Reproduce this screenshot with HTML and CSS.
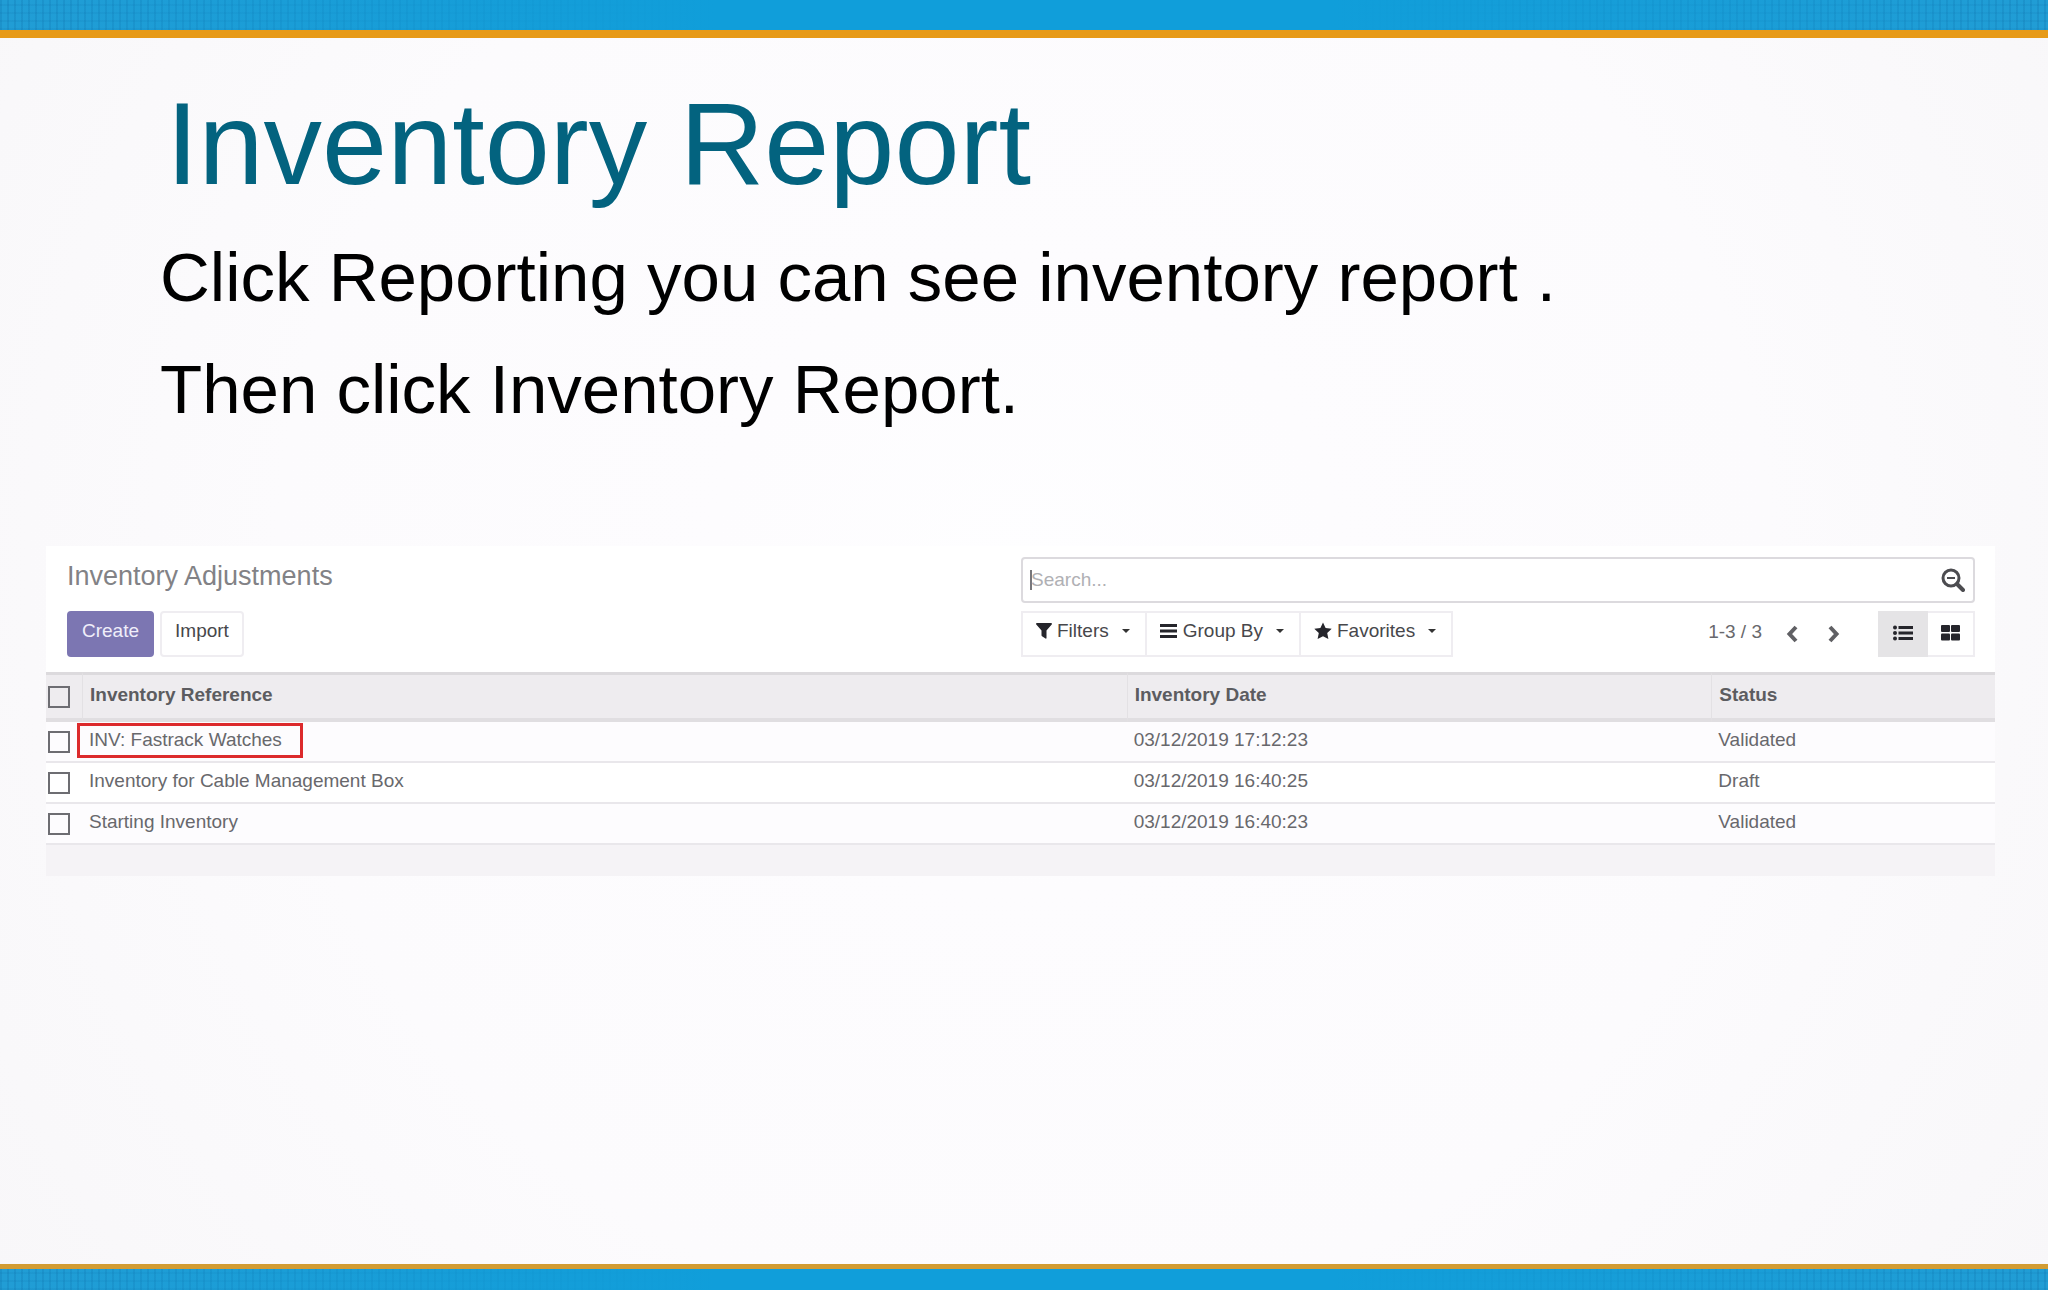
FILE: index.html
```html
<!DOCTYPE html>
<html lang="en">
<head>
  <meta charset="UTF-8">
  <title>Inventory Report</title>
  <link rel="stylesheet" href="styles.css">
</head>
<body>

  <div class="band band-top"></div>

  <main class="slide">
    <h1>Inventory Report</h1>
    <div class="steps">
      <p>Click Reporting you can see inventory report .</p>
      <p>Then click Inventory Report.</p>
    </div>

    <section class="panel">
      <div class="controls">
        <h2>Inventory Adjustments</h2>

        <div class="search">
          <span class="caret"></span>
          <input type="text" placeholder="Search..." aria-label="Search">
          <button type="button" class="icon-btn" aria-label="Search options">
            <svg width="24" height="24" viewBox="0 0 24 24" fill="none" stroke="#4c4c50">
              <circle cx="10" cy="10" r="8" stroke-width="3"/>
              <path d="M16 16l6 6" stroke-width="4" stroke-linecap="round"/>
              <path d="M6 10h8" stroke-width="2"/>
            </svg>
          </button>
        </div>

        <div class="actions">
          <button type="button" class="btn btn-primary">Create</button>
          <button type="button" class="btn">Import</button>
        </div>

        <div class="tools">
          <div class="group">
            <button type="button" class="btn">
              <svg width="16" height="18" viewBox="0 0 16 18"><path d="M0.5 1h15q.8.9 0 1.7L10.500 8.500V16q-.1 1-1 .6L6 14.200q-.5-.4-.5-1V8.500L.5 2.700Q-.3 1.900.5 1z"/></svg>
              Filters <i class="arrow"></i>
            </button>
            <button type="button" class="btn">
              <svg width="18" height="18" viewBox="0 0 18 18"><path d="M0 2h17v3H0zM0 7.500h17v3H0zM0 13h17v3H0z"/></svg>
              Group By <i class="arrow"></i>
            </button>
            <button type="button" class="btn">
              <svg width="18" height="18" viewBox="0 0 18 18"><path d="M9 .5l2.600 5.500 6.100.8-4.500 4.200 1.200 6.100L9 14.200 3.600 17.100l1.200-6.100L.3 6.800 6.400 6z"/></svg>
              Favorites <i class="arrow"></i>
            </button>
          </div>

          <div class="pager">
            <span>1-3 / 3</span>
            <button type="button" class="icon-btn" aria-label="Previous">
              <svg width="12" height="18" viewBox="0 0 12 18" fill="none" stroke="#606064" stroke-width="4"><path d="M10 2L3.500 9l6.500 7"/></svg>
            </button>
            <button type="button" class="icon-btn" aria-label="Next">
              <svg width="12" height="18" viewBox="0 0 12 18" fill="none" stroke="#606064" stroke-width="4"><path d="M2 2l6.500 7L2 16"/></svg>
            </button>
          </div>

          <div class="group views">
            <button type="button" class="btn active" aria-label="List view">
              <svg width="20" height="16" viewBox="0 0 20 16"><path d="M5.500 1H20v3H5.500zM5.500 6.500H20v3H5.500zM5.500 12H20v3H5.500z"/><circle cx="2" cy="2.500" r="2"/><circle cx="2" cy="8" r="2"/><circle cx="2" cy="13.500" r="2"/></svg>
            </button>
            <button type="button" class="btn" aria-label="Kanban view">
              <svg width="19" height="16" viewBox="0 0 19 16"><rect width="9" height="7" rx="1"/><rect x="10" width="9" height="7" rx="1"/><rect y="8.500" width="9" height="7" rx="1"/><rect x="10" y="8.500" width="9" height="7" rx="1"/></svg>
            </button>
          </div>
        </div>
      </div>

      <table>
        <thead>
          <tr>
            <th class="col-check"><input type="checkbox" aria-label="Select all"></th>
            <th class="col-ref">Inventory Reference</th>
            <th class="col-date">Inventory Date</th>
            <th>Status</th>
          </tr>
        </thead>
        <tbody>
          <tr>
            <td><input type="checkbox" aria-label="Select INV: Fastrack Watches"></td>
            <td><span class="marked">INV: Fastrack Watches</span></td>
            <td>03/12/2019 17:12:23</td>
            <td>Validated</td>
          </tr>
          <tr>
            <td><input type="checkbox" aria-label="Select Inventory for Cable Management Box"></td>
            <td>Inventory for Cable Management Box</td>
            <td>03/12/2019 16:40:25</td>
            <td>Draft</td>
          </tr>
          <tr>
            <td><input type="checkbox" aria-label="Select Starting Inventory"></td>
            <td>Starting Inventory</td>
            <td>03/12/2019 16:40:23</td>
            <td>Validated</td>
          </tr>
        </tbody>
      </table>
      <div class="panel-footer"></div>
    </section>
  </main>

  <div class="band band-bottom"></div>

</body>
</html>
```
FILE: styles.css
```css
* {
  box-sizing: border-box;
}
body {
  margin: 0;
  min-height: 100vh;
  display: flex;
  flex-direction: column;
  font-family: "Liberation Sans", Arial, sans-serif;
  color: #68686c;
  background: radial-gradient(circle at 50% 45%, #fefeff 0, #fdfcfe 25%, #fcfbfd 60%, #f8f7f9 100%);
}

/* blue bands with a faint weave that fades out to the middle */
.band {
  background:
    linear-gradient(90deg, rgba(16,158,218,0) 0, #109eda 35%, #109eda 65%, rgba(16,158,218,0) 100%),
    repeating-linear-gradient(90deg, rgba(0,80,140,0.14) 0, rgba(0,80,140,0.14) 2px, transparent 2px, transparent 7px),
    repeating-linear-gradient(0deg, rgba(0,80,140,0.08) 0, rgba(0,80,140,0.08) 2px, transparent 2px, transparent 8px),
    #219dd5;
}
.band-top {
  height: 38px;
  border-bottom: 8px solid #e79a18;
}
.band-bottom {
  height: 26px;
  border-top: 5px solid #d29c33;
}

.slide {
  flex: 1;
  padding: 38px 53px 0 46px;
}
h1 {
  margin: 0 0 0 120px;
  font-size: 117px;
  line-height: 136px;
  font-weight: normal;
  color: #03637f;
}
.steps {
  margin-left: 114px;
  padding-top: 10px;
}
.steps p {
  margin: 0;
  font-size: 69px;
  line-height: 112px;
  color: #000;
}

.panel {
  margin-top: 100px;
  font-size: 19px;
  background: #fff;
}
.controls {
  display: grid;
  grid-template-columns: 1fr 1fr;
  gap: 8px 0;
  padding: 11px 20px 15px 21px;
}
h2 {
  margin: 0;
  font-size: 27px;
  line-height: 38px;
  font-weight: normal;
  color: #828286;
}
.search {
  display: flex;
  align-items: center;
  height: 46px;
  padding: 0 8px 0 7px;
  border: 2px solid #dcdade;
  border-radius: 4px;
}
.search input {
  flex: 1;
  padding: 0;
  border: none;
  outline: none;
  background: none;
  font: inherit;
}
.search input::placeholder {
  color: #b0b0b4;
}
.caret {
  width: 2px;
  height: 20px;
  margin-right: -1px;
  background: #77777b;
}

button {
  font: inherit;
  cursor: pointer;
}
.icon-btn {
  display: flex;
  padding: 0;
  border: none;
  background: none;
}
.btn {
  display: flex;
  align-items: center;
  height: 46px;
  padding: 0 13px 6px;
  border: 2px solid #efedf1;
  border-radius: 4px;
  background: #fff;
  color: #47474b;
}
.btn svg {
  fill: #25252b;
  margin-right: 5px;
}
.btn-primary {
  background: #7c76b2;
  border-color: #7c76b2;
  color: #f0eefa;
}
.actions,
.group {
  display: flex;
}
.actions {
  gap: 6px;
}
.group .btn {
  border-radius: 0;
}
.group .btn + .btn {
  border-left: none;
}
.arrow {
  margin: 0 2px 0 13px;
  border: 4px solid transparent;
  border-top-color: #333;
  border-bottom: none;
}
.tools {
  display: flex;
  align-items: center;
}
.pager {
  display: flex;
  align-items: center;
  gap: 30px;
  margin: 0 38px 0 auto;
}
.pager span {
  margin-right: -6px;
  padding-bottom: 5px;
}
.views .btn {
  padding: 0 13px 2px;
}
.views .btn svg {
  margin: 0;
}
.views .active {
  background: #e5e4e6;
  border-color: #e5e4e6;
}

table {
  width: 100%;
  table-layout: fixed;
  border-collapse: separate;
  border-spacing: 0;
}
th,
td {
  padding: 0 0 0 7px;
  text-align: left;
}
th {
  height: 50px;
  padding-bottom: 4px;
  background: #eeecef;
  border-top: 3px solid #dcdadd;
  border-bottom: 4px solid #e0dee1;
  color: #5c5c60;
}
th + th {
  border-left: 1px solid #e3e1e4;
}
td {
  height: 41px;
  padding-bottom: 4px;
  border-bottom: 2px solid #e9e7eb;
}
tbody tr:nth-child(odd) {
  background: #fdfcfe;
}
th:first-child,
td:first-child {
  padding: 0 0 0 2px;
}
.col-check {
  width: 36px;
}
.col-ref {
  width: 53.6%;
}
.col-date {
  width: 30%;
}
input[type="checkbox"] {
  appearance: none;
  display: block;
  width: 22px;
  height: 22px;
  margin: 0;
  border: 2px solid #6d6d72;
}
/* red callout box around the reference */
.marked {
  position: relative;
}
.marked::after {
  content: "";
  position: absolute;
  inset: -6px -21px -8px -12px;
  border: 3px solid #dc2a2c;
}
.panel-footer {
  height: 31px;
  background: #f5f3f6;
}
```
